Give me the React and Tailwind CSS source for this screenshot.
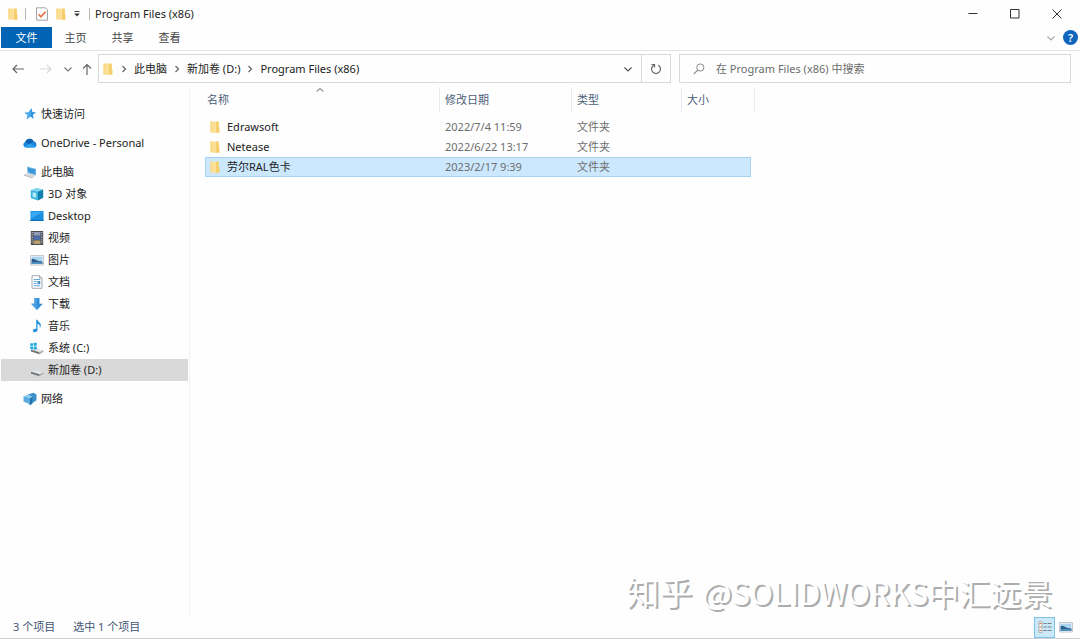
import React, { useState } from 'react';

const FolderIcon = () => (
  <svg viewBox="0 0 14 14" className="h-[14px] w-[14px] shrink-0" aria-hidden="true">
    <path d="M2.5 1.5h5l1 1.2v9.8h-6z" fill="#fbdf94" />
    <path d="M6.5 3.2h4v7.6l-1.4 2H4.6z" fill="#fbe09a" />
    <path d="M8 1.5h2.8v5.2l.7 1v5H8z" fill="#f6ce6c" />
    <path d="M2.5 1.5h1.2v11H2.5z" fill="#f8d681" />
  </svg>
);

const CheckDocIcon = () => (
  <svg viewBox="0 0 14 14" className="h-[14px] w-[14px] shrink-0" aria-hidden="true">
    <path d="M1.5 .8h9l2 2v10.4h-11z" fill="#fbfbfb" stroke="#a3a3aa" />
    <path d="M3.6 7.2l2.3 2.6 4.6-5" fill="none" stroke="#e0703f" strokeWidth="1.6" />
  </svg>
);

const StarIcon = () => (
  <svg viewBox="0 0 14 14" className="h-[14px] w-[14px] shrink-0" aria-hidden="true">
    <path d="M8.4 1.2l1 3.900 3.800.3-3.300 2.300.9 4.400-3.400-2.500-3.900 2.600 1.300-4.300-3.200-2.200 4-.3z" fill="#2f93dd" />
    <path d="M8.400 1.200L7.400 9.600l-3.900 2.600 1.300-4.300-3.200-2.200 4-.3z" fill="#4aa9ea" />
  </svg>
);

const CloudIcon = () => (
  <svg viewBox="0 0 14 14" className="h-[14px] w-[14px] shrink-0" aria-hidden="true">
    <path d="M3 11.500a2.900 2.900 0 01-.8-5.600A4.600 4.600 0 0110.600 5.200 3.200 3.200 0 0111 11.500z" fill="#1a86d9" />
    <path d="M2.200 5.900A4.600 4.600 0 0110.600 5.200L6 8.200z" fill="#0f5fb3" />
    <path d="M1 10.700l6-3.300 5.600 3.500a3 3 0 01-1.600.6H3a3 3 0 01-2-.8z" fill="#2aa0ea" />
  </svg>
);

const PcIcon = () => (
  <svg viewBox="0 0 14 14" className="h-[14px] w-[14px] shrink-0" aria-hidden="true">
    <path d="M4 1.500l9 2.200v6.800L4.400 8z" fill="#7bbbe6" />
    <path d="M5 2.700l7.200 1.800v4.800L5.300 7.300z" fill="#3c97d8" />
    <path d="M1 9.600l3.600-1.300 8 2.400-3.200 2z" fill="#d3d8dc" />
    <path d="M1 9.600l8.400 3.100v.8L1 10.600z" fill="#aab1b7" />
  </svg>
);

const CubeIcon = () => (
  <svg viewBox="0 0 14 14" className="h-[14px] w-[14px] shrink-0" aria-hidden="true">
    <path d="M.800 3l6-2.200 6.400 1.700L8 4.600z" fill="#7fd6ee" />
    <path d="M.800 3L8 4.600v8.800L.800 11z" fill="#38b5dc" />
    <path d="M8 4.600l5.200-2.100v8.300L8 13.400z" fill="#117fae" />
    <path d="M2.600 5.200l3.600.9v4.600l-3.600-1z" fill="#b7ecf7" />
  </svg>
);

const DesktopIcon = () => (
  <svg viewBox="0 0 14 14" className="h-[14px] w-[14px] shrink-0" aria-hidden="true">
    <path d="M.500 2h13v10H.500z" fill="#1b8fe2" />
    <path d="M1.300 2.800h11.400L1.300 9.500z" fill="#3ba9f1" />
    <path d="M.500 10.800h13V12H.500z" fill="#0b6fc0" />
  </svg>
);

const VideoIcon = () => (
  <svg viewBox="0 0 14 14" className="h-[14px] w-[14px] shrink-0" aria-hidden="true">
    <path d="M.800 0h12.400v14H.800z" fill="#4a4d55" />
    <path d="M3.500 1h7v3.600h-7z" fill="#8e9cb8" />
    <path d="M3.500 5.200h7v3.600h-7z" fill="#4c6fae" />
    <path d="M3.500 9.400h7V13h-7z" fill="#b6a06c" />
    <path d="M2.200 1v12M11.800 1v12" stroke="#c3c7cc" strokeWidth="1.200" strokeDasharray="1.200 1.200" />
  </svg>
);

const PictureIcon = () => (
  <svg viewBox="0 0 14 14" className="h-[14px] w-[14px] shrink-0" aria-hidden="true">
    <path d="M.500 2.500h13v9.500H.500z" fill="#f7f9fb" stroke="#b5bcc3" strokeWidth=".8" />
    <path d="M1.600 3.600h10.800v7.300H1.600z" fill="#a9d3ef" />
    <path d="M1.600 6c2-.6 4 .8 5.600 1.600s3.600.6 5.200 1.200v2.100H1.600z" fill="#2b5f8c" />
    <path d="M1.600 9.500c3-.8 7-.8 10.800 0v1.400H1.600z" fill="#4f94c4" />
  </svg>
);

const DocIcon = () => (
  <svg viewBox="0 0 14 14" className="h-[14px] w-[14px] shrink-0" aria-hidden="true">
    <path d="M2 .700h7.500L12 3.200v10.100H2z" fill="#fcfdfe" stroke="#8f9aa5" strokeWidth=".8" />
    <path d="M9.500.700v2.500H12" fill="none" stroke="#8f9aa5" strokeWidth=".8" />
    <path d="M3.700 4.500h6.500M3.700 6.500h3M3.700 8.500h3M3.700 10.700h6.500" stroke="#5aa2d6" strokeWidth=".9" />
    <path d="M7.500 6h2.800v3.200H7.500z" fill="#4a8fc6" />
  </svg>
);

const DownloadIcon = () => (
  <svg viewBox="0 0 14 14" className="h-[14px] w-[14px] shrink-0" aria-hidden="true">
    <path d="M4.500 1h5v5.800h3.300L7 13 1.200 6.800h3.300z" fill="#2f8fdb" />
    <path d="M4.500 1H7v12L1.200 6.800h3.300z" fill="#479fe4" />
  </svg>
);

const MusicIcon = () => (
  <svg viewBox="0 0 14 14" className="h-[14px] w-[14px] shrink-0" aria-hidden="true">
    <path d="M6.200.700h1.300c.3 2.200 3.700 2.800 3.300 6.200-.2 1-.6 1.500-1 2 .4-2.400-.8-3.600-2.300-4.100v6c0 1.500-1.200 2.400-2.600 2.400-1.200 0-2-.6-2-1.500 0-1.200 1.400-2.200 3.300-1.900z" fill="#1f8fe0" />
  </svg>
);

const DiskIcon = ({ system }) => (
  <svg viewBox="0 0 14 14" className="h-[14px] w-[14px] shrink-0" aria-hidden="true">
    <path d="M1 8.800l4-1.600 8.500 2-4 2z" fill="#e2e4e6" />
    <path d="M1 8.800l8.500 2.400v2L1 10.400z" fill="#6c7074" />
    <path d="M9.500 11.200l4-2v1.600l-4 2.400z" fill="#a9adb1" />
    {system && (
      <path d="M.300 2.200h2.700v2.600H.300zM3.700 1.800h3v3h-3zM.300 5.500h2.700v2.700H.300zM3.700 5.500h3v3h-3z" fill="#19a8dc" />
    )}
  </svg>
);

const NetworkIcon = () => (
  <svg viewBox="0 0 14 14" className="h-[14px] w-[14px] shrink-0" aria-hidden="true">
    <path d="M5 2.600l5.500-1.800 3 1.700v5.800L9.500 11z" fill="#3b8fcb" />
    <path d="M.500 4.400l4.500-1.600 4.500 2v6.400l-2.500 2-2-1.600-4.500-2z" fill="#5aabdf" />
    <path d="M7 6.300l2.500-1.500v6.400l-2.500 2z" fill="#2470a8" />
    <path d="M.500 4.400L5 2.800l4.500 2L7 6.300z" fill="#8fcdf0" />
  </svg>
);

const Chevron = ({ dir = 'down', className = '' }) => {
  const d = {
    down: 'M1.500 3.500L5 7l3.500-3.500',
    right: 'M3.500 2L6.500 5l-3 3',
    up: 'M1.500 6.500L5 3.500l3.500 3',
  };
  return (
    <svg viewBox="0 0 10 10" className={`h-[10px] w-[10px] shrink-0 ${className}`} aria-hidden="true">
      <path d={d[dir]} fill="none" stroke="currentColor" strokeWidth="1.200" />
    </svg>
  );
};

const Arrow = ({ dir }) => {
  const d = {
    left: 'M12 6H1M5 2L1 6l4 4',
    right: 'M0 6h11M7 2l4 4-4 4',
    up: 'M6 12V1.500M2 5.500l4-4 4 4',
  };
  return (
    <svg viewBox="0 0 12 12" className="h-[12px] w-[12px]" aria-hidden="true">
      <path d={d[dir]} fill="none" stroke="currentColor" strokeWidth="1.200" />
    </svg>
  );
};

const navGroups = [
  [{ label: '快速访问', icon: StarIcon }],
  [{ label: 'OneDrive - Personal', icon: CloudIcon }],
  [
    { label: '此电脑', icon: PcIcon },
    { label: '3D 对象', icon: CubeIcon, child: true },
    { label: 'Desktop', icon: DesktopIcon, child: true },
    { label: '视频', icon: VideoIcon, child: true },
    { label: '图片', icon: PictureIcon, child: true },
    { label: '文档', icon: DocIcon, child: true },
    { label: '下载', icon: DownloadIcon, child: true },
    { label: '音乐', icon: MusicIcon, child: true },
    { label: '系统 (C:)', icon: DiskIcon, child: true, system: true },
    { label: '新加卷 (D:)', icon: DiskIcon, child: true, active: true },
  ],
  [{ label: '网络', icon: NetworkIcon }],
];

const files = [
  { name: 'Edrawsoft', date: '2022/7/4 11:59', type: '文件夹' },
  { name: 'Netease', date: '2022/6/22 13:17', type: '文件夹' },
  { name: '劳尔RAL色卡', date: '2023/2/17 9:39', type: '文件夹' },
];

const TitleBar = () => (
  <header className="flex h-[27px] items-center pl-[6px] text-[#444]">
    <FolderIcon />
    <span className="ml-[5px] h-[12px] w-px bg-[#b5b5b5]" />
    <button type="button" aria-label="属性" className="ml-[9px]">
      <CheckDocIcon />
    </button>
    <button type="button" aria-label="新建文件夹" className="ml-[5px]">
      <FolderIcon />
    </button>
    <button type="button" aria-label="自定义快速访问工具栏" className="ml-[5px]">
      <svg viewBox="0 0 8 8" className="h-[8px] w-[8px]" aria-hidden="true">
        <path d="M1.500 1.500h5" stroke="#444" />
        <path d="M1.200 3.500h5.600L4 6.500z" fill="#333" />
      </svg>
    </button>
    <span className="ml-[8px] h-[12px] w-px bg-[#b5b5b5]" />
    <h1 className="ml-[5px] flex-1 text-[#222]">Program Files (x86)</h1>
    <div className="mr-[2px] flex self-stretch">
      <button type="button" aria-label="最小化" className="flex w-[42px] items-center justify-center">
        <svg viewBox="0 0 10 10" className="h-[10px] w-[10px]"><path d="M.500 4.500h9" stroke="#333" /></svg>
      </button>
      <button type="button" aria-label="最大化" className="flex w-[42px] items-center justify-center">
        <svg viewBox="0 0 10 10" className="h-[10px] w-[10px]"><path d="M.500.500h8.500v8.500H.500z" fill="none" stroke="#333" /></svg>
      </button>
      <button type="button" aria-label="关闭" className="flex w-[42px] items-center justify-center">
        <svg viewBox="0 0 10 10" className="h-[10px] w-[10px]"><path d="M.500.500l9 9M9.500.500l-9 9" stroke="#333" /></svg>
      </button>
    </div>
  </header>
);

const Ribbon = () => (
  <div className="flex h-[24px] items-start border-b border-[#e4e4e4] pl-px">
    <button type="button" className="h-[21px] w-[51px] bg-[#0063b4] text-white">文件</button>
    {['主页', '共享', '查看'].map((tab) => (
      <button key={tab} type="button" className="h-[21px] w-[47px] text-[#444]">{tab}</button>
    ))}
    <div className="ml-auto flex h-[21px] items-center gap-[7px] pr-[2px]">
      <button type="button" aria-label="展开功能区" className="text-[#aaa]">
        <Chevron />
      </button>
      <button type="button" aria-label="帮助" className="flex h-[15px] w-[15px] items-center justify-center rounded-full bg-[#0f65bd] font-semibold text-white">
        ?
      </button>
    </div>
  </div>
);

const AddressBar = () => {
  const [query, setQuery] = useState('');
  const crumbs = ['此电脑', '新加卷 (D:)', 'Program Files (x86)'];

  return (
    <div className="flex h-[35px] items-center pr-[9px]">
      <div className="flex w-[98px] shrink-0 items-center pl-[12px] text-[#666]">
        <button type="button" aria-label="后退"><Arrow dir="left" /></button>
        <button type="button" aria-label="前进" className="ml-[16px] text-[#d8d8d8]"><Arrow dir="right" /></button>
        <button type="button" aria-label="最近浏览的位置" className="ml-[11px]"><Chevron className="text-[#777]" /></button>
        <button type="button" aria-label="上移" className="ml-[8px]"><Arrow dir="up" /></button>
      </div>

      <div className="flex h-[29px] min-w-0 flex-569 items-center border border-[#d9d9d9] pl-[2px] text-[#222]">
        <FolderIcon />
        {crumbs.map((crumb) => (
          <React.Fragment key={crumb}>
            <Chevron dir="right" className="mx-[4px] text-[#666]" />
            <button type="button" className="mx-px whitespace-nowrap">{crumb}</button>
          </React.Fragment>
        ))}
        <button type="button" aria-label="以前的位置" className="ml-auto flex h-full w-[27px] items-center justify-center text-[#555]">
          <Chevron />
        </button>
        <button type="button" aria-label="刷新" className="flex h-full w-[29px] items-center justify-center border-l border-[#d9d9d9]">
          <svg viewBox="0 0 12 12" className="h-[12px] w-[12px]" aria-hidden="true">
            <path d="M8.300 2.200a4.500 4.500 0 11-4.600 0" fill="none" stroke="#666" strokeWidth="1.200" />
            <path d="M1.500 1.500h3v3" fill="none" stroke="#666" strokeWidth="1.200" />
          </svg>
        </button>
      </div>

      <label className="ml-[8px] flex h-[29px] min-w-0 flex-377 items-center border border-[#d9d9d9] pl-[13px]">
        <svg viewBox="0 0 12 12" className="h-[12px] w-[12px] shrink-0" aria-hidden="true">
          <circle cx="7.300" cy="4.500" r="3.600" fill="none" stroke="#888" />
          <path d="M4.700 7.200L.800 11" stroke="#888" strokeWidth="1.100" />
        </svg>
        <input
          type="search"
          aria-label="搜索"
          placeholder="在 Program Files (x86) 中搜索"
          value={query}
          onChange={(e) => setQuery(e.target.value)}
          className="ml-[11px] min-w-0 flex-1 bg-transparent text-[#222] outline-none placeholder:text-[#6d6d6d]"
        />
      </label>
    </div>
  );
};

const Sidebar = () => (
  <nav className="flex w-[190px] shrink-0 flex-col gap-[7px] border-r border-[#f3f3f3] pt-[16px] pr-[1px] pl-px">
    {navGroups.map((group) => (
      <ul key={group[0].label}>
        {group.map(({ label, icon: Icon, child, active, system }) => (
          <li key={label} className={active ? 'bg-[#d9d9d9]' : ''}>
            <a href="#" className={`flex h-[22px] items-center gap-[4px] ${child ? 'pl-[29px]' : 'pl-[22px]'}`}>
              <Icon {...(system ? { system } : {})} />
              {label}
            </a>
          </li>
        ))}
      </ul>
    ))}
  </nav>
);

const FileTable = () => {
  const [selected, setSelected] = useState('劳尔RAL色卡');
  const columns = [
    { label: '名称', width: 'w-[235px]', pad: 'pl-[2px]', sorted: true },
    { label: '修改日期', width: 'w-[132px]', pad: 'pl-[5px]' },
    { label: '类型', width: 'w-[110px]', pad: 'pl-[5px]' },
    { label: '大小', width: 'w-[69px]', pad: 'pl-[5px]', last: true },
  ];

  return (
    <main className="min-w-0 flex-1 pl-[15px]">
      <table className="w-[550px] table-fixed border-separate border-spacing-0 text-left">
        <thead>
          <tr>
            {columns.map((col) => (
              <th key={col.label} className={`relative p-0 font-normal text-[#4c607a] ${col.width}`}>
                <div className={`mb-[5px] flex h-[25px] items-center ${col.pad} ${col.last ? '' : 'border-r border-[#e8ecf0]'}`}>
                  {col.label}
                </div>
                {col.sorted && (
                  <Chevron dir="up" className="absolute top-[-2px] left-[110px] text-[#999]" />
                )}
              </th>
            ))}
            <td className="w-[4px] p-0">
              <div className="mb-[5px] h-[25px] border-r border-[#e8ecf0]" />
            </td>
          </tr>
        </thead>
        <tbody>
          {files.map((file) => {
            const on = file.name === selected;
            const cell = on ? 'border-y border-[#a6d3f0] bg-[#cce8ff]' : 'border-y border-transparent';
            return (
              <tr key={file.name} onClick={() => setSelected(file.name)} className="h-[20px] text-[#6d6d6d]">
                <td className={`border-l p-0 pl-[2px] text-[#222] ${cell}`}>
                  <div className="flex items-center gap-[5px]">
                    <FolderIcon />
                    {file.name}
                  </div>
                </td>
                <td className={`p-0 pl-[5px] ${cell}`}>{file.date}</td>
                <td className={`p-0 pl-[5px] ${cell}`}>{file.type}</td>
                <td className={`border-r p-0 ${cell}`} />
              </tr>
            );
          })}
        </tbody>
      </table>
    </main>
  );
};

const StatusBar = () => (
  <footer className="flex h-[23px] items-center gap-[18px] border-b border-[#cfcfcf] pr-[7px] pl-[13px] text-[#3f5573]">
    <span>3 个项目</span>
    <span>选中 1 个项目</span>
    <div className="ml-auto flex items-center gap-[4px]">
      <button type="button" aria-label="详细信息" className="flex h-[21px] w-[21px] items-center justify-center border border-[#7fc4e8] bg-[#cbe8f8]">
        <svg viewBox="0 0 14 14" className="h-[14px] w-[14px]" aria-hidden="true">
          <path d="M1 1.500h3v11H1z" fill="#fff" stroke="#999" strokeWidth=".7" />
          <path d="M1.500 3.500h2M1.500 7h2M1.500 10.500h2" stroke="#c66a4a" strokeWidth="1.200" />
          <path d="M5.500 3.500h3M9.500 3.500h4M5.500 7h3M9.500 7h4M5.500 10.500h3M9.500 10.500h4" stroke="#6f7f8c" />
        </svg>
      </button>
      <button type="button" aria-label="大缩略图">
        <PictureIcon />
      </button>
    </div>
  </footer>
);

const App = () => {
  return (
    <div className="relative flex min-h-screen flex-col bg-[#fefefe] font-['Noto_Sans','Noto_Sans_CJK_SC',sans-serif] text-[11px] leading-[16px] text-[#222]">
      <TitleBar />
      <Ribbon />
      <AddressBar />
      <div className="flex flex-1 pt-px">
        <Sidebar />
        <FileTable />
      </div>
      <StatusBar />

      {/* Watermark */}
      <p className="pointer-events-none absolute right-[28px] bottom-[27px] flex items-baseline gap-[10px] font-['Noto_Sans_CJK_SC',sans-serif] text-[31px] leading-[40px] whitespace-nowrap text-white [text-shadow:2px_2px_0_#adadad]">
        <span className="text-[33px]">知乎</span>
        <span>@SOLIDWORKS中汇远景</span>
      </p>
    </div>
  );
};

export default App;
